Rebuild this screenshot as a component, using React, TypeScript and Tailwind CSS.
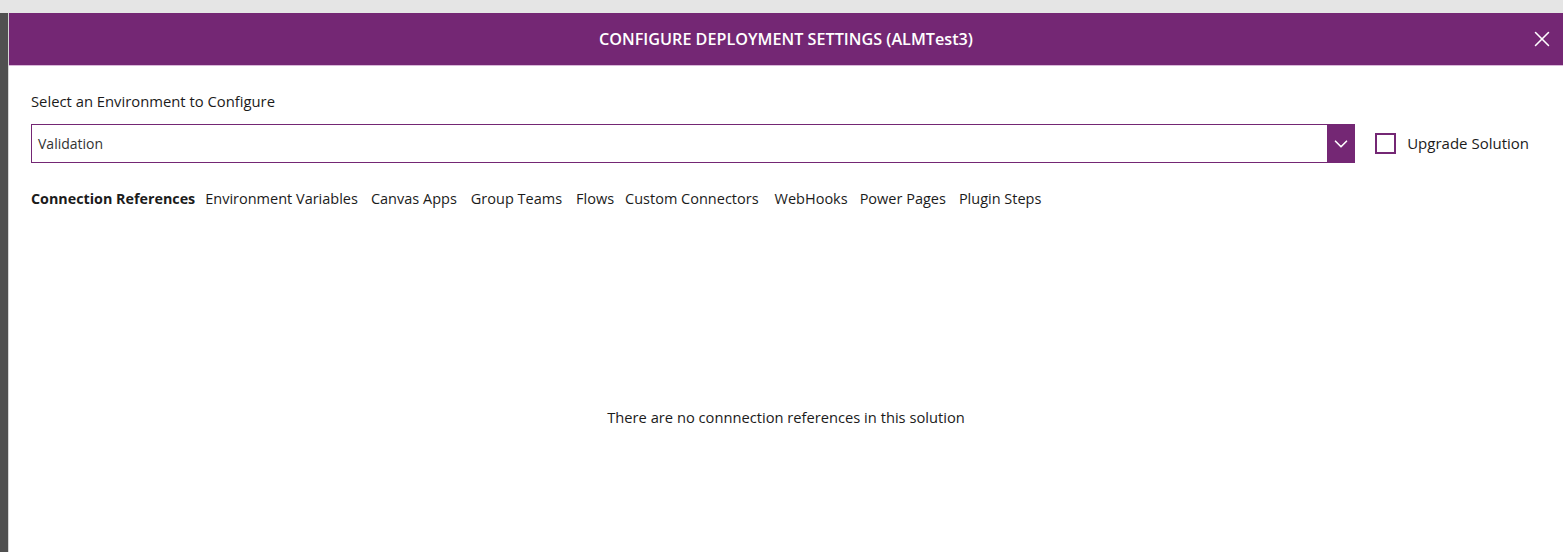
import { X, ChevronDown } from "lucide-react";

const tabs = [
  { label: "Connection References", active: true, ml: "ml-0" },
  { label: "Environment Variables", ml: "ml-[10px]" },
  { label: "Canvas Apps", ml: "ml-[13px]" },
  { label: "Group Teams", ml: "ml-[14px]" },
  { label: "Flows", ml: "ml-[14px]" },
  { label: "Custom Connectors", ml: "ml-[11px]" },
  { label: "WebHooks", ml: "ml-[16px]" },
  { label: "Power Pages", ml: "ml-[12px]" },
  { label: "Plugin Steps", ml: "ml-[13px]" },
];

export default function App() {
  return (
    <div className="flex h-[552px] w-[1563px] flex-col overflow-hidden bg-[#e5e5e5] font-['Open_Sans','Noto_Sans',sans-serif] text-[#1b1b1b]">
      <div className="h-[13px] shrink-0" />
      <div className="flex min-h-0 flex-1">
        <div className="w-[8px] shrink-0 bg-[#505050]" />
        <div className="w-px shrink-0 bg-[#d6d6d6]" />
        <div className="flex min-w-0 flex-1 flex-col bg-white">
          <header className="relative flex h-[53px] shrink-0 items-center justify-center border-b border-[#d9b8d9] bg-[#742774]">
            <h1 className="text-[16.2px] font-semibold text-white">
              CONFIGURE DEPLOYMENT SETTINGS (ALMTest3)
            </h1>
            <button className="absolute right-[8px] top-[13px] text-white">
              <X className="size-[26px]" strokeWidth={1.4} />
            </button>
          </header>

          <div className="flex flex-1 flex-col px-[22px] pt-[25px]">
            <label className="text-[14.8px] leading-5">Select an Environment to Configure</label>

            <div className="mt-[13px] flex items-center">
              <div className="flex h-[39px] flex-1 items-stretch border border-[#742774]">
                <div className="flex flex-1 items-center px-[6px] text-[14px] text-[#333]">Validation</div>
                <div className="flex w-[27px] items-center justify-center bg-[#742774] text-white">
                  <ChevronDown className="size-[22px]" strokeWidth={1.8} />
                </div>
              </div>
              <div className="ml-[20px] mr-[12px] flex items-center">
                <span className="size-[21px] border-2 border-[#742774] bg-white" />
                <span className="ml-[11px] text-[15px]">Upgrade Solution</span>
              </div>
            </div>

            <nav className="mt-[26px] flex items-center text-[14.5px] leading-5">
              {tabs.map((t) => (
                <span key={t.label} className={`${t.ml} ${t.active ? "text-[14.3px] font-bold" : ""}`}>
                  {t.label}
                </span>
              ))}
            </nav>

            <div className="mt-[197px] text-center text-[14.7px]">
              There are no connnection references in this solution
            </div>
          </div>
        </div>
      </div>
    </div>
  );
}
